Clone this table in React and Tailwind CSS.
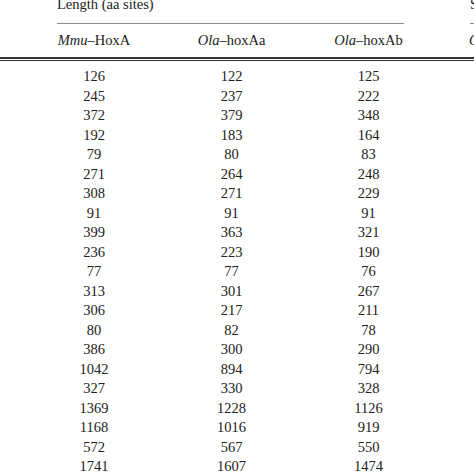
import React from "react";

const rows = [
  [126, 122, 125],
  [245, 237, 222],
  [372, 379, 348],
  [192, 183, 164],
  [79, 80, 83],
  [271, 264, 248],
  [308, 271, 229],
  [91, 91, 91],
  [399, 363, 321],
  [236, 223, 190],
  [77, 77, 76],
  [313, 301, 267],
  [306, 217, 211],
  [80, 82, 78],
  [386, 300, 290],
  [1042, 894, 794],
  [327, 330, 328],
  [1369, 1228, 1126],
  [1168, 1016, 919],
  [572, 567, 550],
  [1741, 1607, 1474],
];

function Species({ abbr, gene }) {
  return (
    <span>
      <i>{abbr}</i>–{gene}
    </span>
  );
}

export default function App() {
  return (
    <div className="w-[474px] h-[474px] overflow-hidden bg-white text-[#222] font-['Liberation_Serif',serif] text-[14.5px] leading-[19.5px]">
      <div className="w-[700px]">
        {/* group heading */}
        <div className="-mt-[5px] flex pl-[57px]">
          <div className="w-[347px]">Length (aa sites)</div>
          <div className="ml-[66px]">Similarity (%)</div>
        </div>
        <div className="mt-[8px] flex pl-[57px]">
          <div className="w-[347px] h-px bg-[#8c8c8c]" />
          <div className="ml-[66px] w-[200px] h-px bg-[#8c8c8c]" />
        </div>

        {/* column headings */}
        <div className="mt-[7px] flex pl-[25px]">
          <div className="w-[138px] text-center">
            <Species abbr="Mmu" gene="HoxA" />
          </div>
          <div className="w-[137px] text-center">
            <Species abbr="Ola" gene="hoxAa" />
          </div>
          <div className="w-[137px] text-center">
            <Species abbr="Ola" gene="hoxAb" />
          </div>
          <div className="ml-[32px]">
            <Species abbr="Ola" gene="hoxAa" />
          </div>
        </div>
        <div className="mt-[7px] w-[474px] border-t-2 border-b border-[#333] h-[4px]" />

        {/* data */}
        <div className="mt-[6px] flex flex-col pl-[25px]">
          {rows.map((r, i) => (
            <div key={i} className="flex">
              <div className="w-[138px] text-center">{r[0]}</div>
              <div className="w-[137px] text-center">{r[1]}</div>
              <div className="w-[137px] text-center">{r[2]}</div>
            </div>
          ))}
        </div>
      </div>
    </div>
  );
}
